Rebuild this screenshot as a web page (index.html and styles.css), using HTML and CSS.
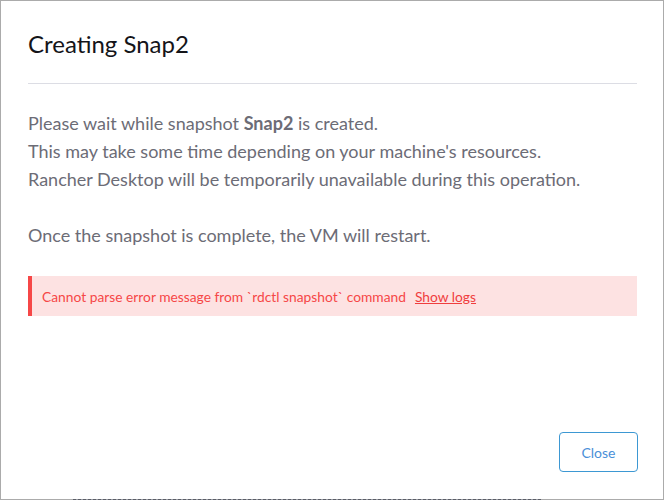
FILE: index.html
```html
<!DOCTYPE html>
<html lang="en">
<head>
<meta charset="utf-8">
<title>Creating Snap2</title>
<link rel="stylesheet" href="styles.css">
</head>
<body>
<div class="window">
  <div class="dialog">
    <h1 class="title">Creating Snap2</h1>
    <hr class="divider">
    <div class="message">
      <p>Please wait while snapshot <b>Snap2</b> is created.<br>This may take some time depending on your machine's resources.<br>Rancher Desktop will be temporarily unavailable during this operation.</p>
      <p>Once the snapshot is complete, the VM will restart.</p>
    </div>
    <div class="banner">
      <span class="banner-text">Cannot parse error message from `rdctl snapshot` command</span>
      <a class="banner-link" href="#">Show logs</a>
    </div>
    <div class="footer">
      <button class="btn" type="button">Close</button>
    </div>
  </div>
</div>
</body>
</html>
```

FILE: styles.css
```css
html, body {
  margin: 0;
  padding: 0;
  background: #ffffff;
}

body {
  font-family: Lato, "Open Sans", "Liberation Sans", sans-serif;
  width: 665px;
  height: 500px;
  overflow: hidden;
}

.window {
  position: relative;
  box-sizing: border-box;
  width: 664px;
  height: 500px;
  border: 1px solid #ababab;
  background: #ffffff;
}

.window::after {
  content: "";
  position: absolute;
  left: 72px;
  bottom: -1px;
  width: 468px;
  height: 1px;
  background: repeating-linear-gradient(90deg, #5a5d66 0 3px, #9a9ca3 3px 5px);
}

.dialog {
  box-sizing: border-box;
  height: 100%;
  display: flex;
  flex-direction: column;
  padding: 30px 25px 27px 27px;
}

.title {
  margin: 0;
  font-size: 24px;
  font-weight: 400;
  line-height: 26px;
  color: #141419;
}

.divider {
  margin: 26px 1px 0 0;
  border: 0;
  height: 1px;
  background: #dcdde4;
}

.message {
  margin-top: 25px;
  font-size: 18px;
  line-height: 28px;
  color: #6c6c76;
}

.message p {
  margin: 0 0 28px 0;
}

.message p:last-child {
  margin-bottom: 0;
}

.message b {
  font-weight: 700;
}

.banner {
  margin-top: 27px;
  margin-right: 1px;
  height: 40px;
  box-sizing: border-box;
  display: flex;
  align-items: center;
  background: #fde2e2;
  border-left: 4px solid #f64747;
  padding-left: 10px;
  font-size: 13.8px;
  color: #f64747;
}

.banner-link {
  margin-left: 9px;
  color: #f03e3e;
  text-decoration: underline;
}

.footer {
  margin-top: auto;
  display: flex;
  justify-content: flex-end;
}

.btn {
  box-sizing: border-box;
  height: 40px;
  width: 79px;
  background: #ffffff;
  border: 1px solid #3d98d3;
  border-radius: 4px;
  color: #4a8fd8;
  font-family: Lato, "Open Sans", "Liberation Sans", sans-serif;
  font-size: 14px;
  padding: 0;
}
```
